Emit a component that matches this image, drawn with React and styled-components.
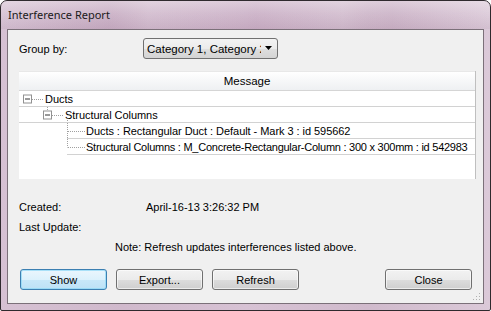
import React from "react";
import styled, { createGlobalStyle } from "styled-components";

const Global = createGlobalStyle`
  html, body { margin: 0; padding: 0; background: #ffffff; }
  body { width: 491px; height: 311px; overflow: hidden; }
  * { box-sizing: border-box; }
`;

const Frame = styled.div`
  width: 491px;
  height: 311px;
  display: flex;
  flex-direction: column;
  border: 1px solid #2f2a2e;
  border-radius: 7px 7px 2px 2px;
  background: linear-gradient(90deg, #d6c1d3 0%, #d0b9cc 25%, #d7c2d4 50%, #d0bacc 75%, #dbc9d8 100%);
  overflow: hidden;
`;

const TitleBar = styled.div`
  height: 28px;
  flex: none;
  display: flex;
  align-items: center;
  padding: 0 0 2px 7px;
  background:
    linear-gradient(180deg, rgba(255,255,255,0.35) 0%, rgba(255,255,255,0.1) 45%, rgba(120,80,110,0.08) 100%),
    linear-gradient(90deg, rgba(0,0,0,0) 0%, rgba(150,100,140,0.15) 22%, rgba(0,0,0,0) 30%, rgba(150,100,140,0.2) 52%, rgba(0,0,0,0) 70%, rgba(150,100,140,0.12) 80%, rgba(0,0,0,0) 100%);
  font-family: "Noto Sans", "Open Sans", sans-serif;
  font-size: 11px;
  color: #1a1a1a;
`;

const Client = styled.div`
  flex: none;
  margin: 0 6px 0 6px;
  height: 275px;
  border: 1px solid #7b7079;
  background: #f0f0f0;
  display: flex;
  flex-direction: column;
  padding: 8px 8px 0 11px;
  font-family: "Liberation Sans", Arial, sans-serif;
  font-size: 11px;
  color: #000;
  position: relative;
`;

const GroupRow = styled.div`
  display: flex;
  align-items: center;
  height: 21px;
`;

const Label = styled.div`
  width: ${p => p.$w || 124}px;
  flex: none;
`;

const Combo = styled.div`
  width: 135px;
  height: 21px;
  border: 1px solid #707070;
  border-radius: 3px;
  background: linear-gradient(180deg, #f3f3f3 0%, #ebebeb 50%, #dfdfdf 50%, #d4d4d4 100%);
  display: flex;
  align-items: center;
  padding-left: 3px;
  overflow: hidden;
  white-space: nowrap;
  font-size: 11.5px;
`;

const ComboText = styled.span`
  flex: 1;
  overflow: hidden;
`;

const ComboArrow = styled.span`
  width: 16px;
  flex: none;
  display: flex;
  justify-content: center;
  align-items: center;
`;

const List = styled.div`
  margin-top: 12px;
  height: 108px;
  width: 457px;
  background: #fff;
  border-right: 1px solid #bfbfbf;
  display: flex;
  flex-direction: column;
`;

const Header = styled.div`
  height: 20px;
  flex: none;
  display: flex;
  align-items: center;
  justify-content: center;
  background: linear-gradient(180deg, #ffffff 0%, #f7f8f9 45%, #eef0f2 100%);
  border-bottom: 1px solid #d5d5d5;
  border-top: 1px solid #e8e8e8;
  font-size: 11.5px;
`;

const Row = styled.div`
  height: 16px;
  display: flex;
  align-items: center;
  position: relative;
  white-space: nowrap;
  &::after {
    content: "";
    position: absolute;
    left: ${p => p.$lineFrom}px;
    right: 0;
    bottom: 0;
    border-bottom: 1px solid #d2d2d2;
  }
`;

const Glyph = styled.svg`
  flex: none;
  overflow: visible;
`;

const RowText = styled.span`
  font-size: 11px;
  letter-spacing: ${p => p.$spacing || -0.05}px;
`;

const Info = styled.div`
  margin-top: 20px;
  display: flex;
  flex-direction: column;
  gap: 5px;
`;

const InfoRow = styled.div`
  display: flex;
  align-items: center;
  height: 15px;
  font-size: 11px;
`;

const Note = styled.div`
  margin-top: 7px;
  height: 15px;
  padding-left: 96px;
  font-size: 11px;
`;

const ButtonBar = styled.div`
  margin-top: 13px;
  display: flex;
  gap: 9px;
  padding-left: 1px;
`;

const Button = styled.button`
  width: 87px;
  height: 21px;
  border: 1px solid ${p => (p.$default ? "#3c7fb1" : "#707070")};
  border-radius: 3px;
  background: ${p =>
    p.$default
      ? "linear-gradient(180deg, #eaf6fd 0%, #dcf1fc 50%, #c8e8f9 50%, #bde2f6 100%)"
      : "linear-gradient(180deg, #f2f2f2 0%, #ebebeb 50%, #dddddd 50%, #cfcfcf 100%)"};
  box-shadow: inset 0 0 0 1px ${p => (p.$default ? "rgba(140,215,245,0.7)" : "rgba(255,255,255,0.6)")};
  font-family: "Liberation Sans", Arial, sans-serif;
  font-size: 11px;
  color: #000;
  padding: 0;
  margin-left: ${p => p.$push || 0}px;
`;

const Grip = styled.svg`
  position: absolute;
  right: 2px;
  bottom: 2px;
`;

const Dotted = ({ x1, y1, x2, y2 }) => (
  <line x1={x1} y1={y1} x2={x2} y2={y2} stroke="#a0a0a0" strokeWidth="1" strokeDasharray="1 1" />
);

const Expander = ({ x, y }) => (
  <g>
    <rect x={x + 0.5} y={y + 0.5} width="8" height="8" fill="#fff" stroke="#919191" />
    <line x1={x + 2} y1={y + 4.5} x2={x + 7} y2={y + 4.5} stroke="#333" />
  </g>
);

const TreeGlyph = ({ level, last }) => {
  if (level === 0) {
    return (
      <Glyph width="26" height="16">
        <Expander x={4} y={3.5} />
        <Dotted x1={13} y1={8.5} x2={25} y2={8.5} />
      </Glyph>
    );
  }
  if (level === 1) {
    return (
      <Glyph width="46" height="16">
        <Dotted x1={28.5} y1={0} x2={28.5} y2={4} />
        <Expander x={24} y={3.5} />
        <Dotted x1={33} y1={8.5} x2={45} y2={8.5} />
        <Dotted x1={48.5} y1={13} x2={48.5} y2={16} />
      </Glyph>
    );
  }
  return (
    <Glyph width="67" height="16">
      <Dotted x1={48.5} y1={0} x2={48.5} y2={last ? 8.5 : 16} />
      <Dotted x1={49} y1={8.5} x2={66} y2={8.5} />
    </Glyph>
  );
};

const rows = [
  { level: 0, text: "Ducts", lineFrom: 0 },
  { level: 1, text: "Structural Columns", lineFrom: 0 },
  { level: 2, text: "Ducts : Rectangular Duct : Default - Mark 3 : id 595662", lineFrom: 48 },
  { level: 2, text: "Structural Columns : M_Concrete-Rectangular-Column : 300 x 300mm : id 542983", lineFrom: 48, last: true, spacing: -0.25 },
];

export default function App() {
  return (
    <>
      <Global />
      <Frame>
        <TitleBar>Interference Report</TitleBar>
        <Client>
          <GroupRow>
            <Label>Group by:</Label>
            <Combo>
              <ComboText>Category 1, Category 2</ComboText>
              <ComboArrow>
                <svg width="8" height="5">
                  <path d="M0 0 H7 L3.5 4 Z" fill="#000" />
                </svg>
              </ComboArrow>
            </Combo>
          </GroupRow>
          <List>
            <Header>Message</Header>
            {rows.map((r, i) => (
              <Row key={i} $lineFrom={r.lineFrom}>
                <TreeGlyph level={r.level} last={r.last} />
                <RowText $spacing={r.spacing}>{r.text}</RowText>
              </Row>
            ))}
          </List>
          <Info>
            <InfoRow>
              <Label $w={127}>Created:</Label>
              <span>April-16-13 3:26:32 PM</span>
            </InfoRow>
            <InfoRow>
              <Label $w={127}>Last Update:</Label>
            </InfoRow>
          </Info>
          <Note>Note: Refresh updates interferences listed above.</Note>
          <ButtonBar>
            <Button $default>Show</Button>
            <Button>Export...</Button>
            <Button>Refresh</Button>
            <Button $push={77}>Close</Button>
          </ButtonBar>
          <Grip width="8" height="8">
            <rect x="6" y="0" width="1" height="1" fill="#b0b0b0" />
            <rect x="3" y="3" width="1" height="1" fill="#b0b0b0" />
            <rect x="6" y="3" width="1" height="1" fill="#b0b0b0" />
            <rect x="0" y="6" width="1" height="1" fill="#b0b0b0" />
            <rect x="3" y="6" width="1" height="1" fill="#b0b0b0" />
            <rect x="6" y="6" width="1" height="1" fill="#b0b0b0" />
          </Grip>
        </Client>
      </Frame>
    </>
  );
}
